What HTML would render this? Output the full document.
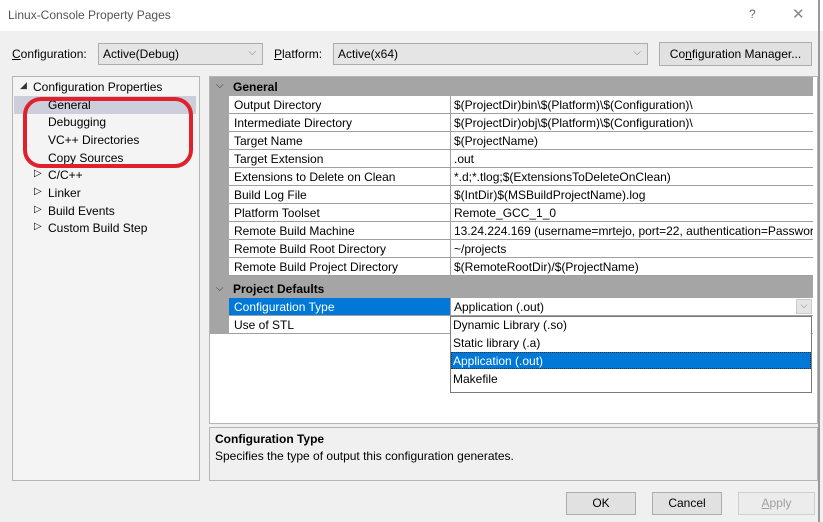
<!DOCTYPE html>
<html><head><style>
*{margin:0;padding:0;box-sizing:border-box}
body{width:823px;height:522px;background:#f0f0f0;font-family:"Liberation Sans",sans-serif;font-size:12px;color:#000;position:relative;overflow:hidden}
.a{position:absolute;white-space:nowrap}
.row{position:absolute;left:229px;width:584px;height:18px;background:#fff;border-bottom:1px solid #a0a0a0;white-space:nowrap;overflow:hidden}
.row span{position:absolute;top:2px;white-space:nowrap}
.row .n{left:5px}
.row .v{left:225px}
.row:before{content:"";position:absolute;left:221px;top:0;width:1px;height:18px;background:#a0a0a0}
.btn{position:absolute;height:23px;background:#e1e1e1;border:1px solid #adadad;text-align:center;line-height:21px}
</style></head><body>
<div class="a" style="left:0;top:0;width:823px;height:31px;background:#fff"></div>
<div class="a" style="left:8px;top:8px;color:#555;font-size:12px">Linux-Console Property Pages</div>
<div class="a" style="left:749px;top:7px;color:#666">?</div>
<div class="a" style="left:792px;top:5px;color:#888;font-size:15px;font-weight:lighter">✕</div>
<div class="a" style="left:818px;top:0;width:2px;height:522px;background:#999"></div>

<div class="a" style="left:12px;top:47px"><u>C</u>onfiguration:</div>
<div class="a" style="left:98px;top:43px;width:165px;height:22px;border:1px solid #adadad;background:#e5e5e5;padding:3px 4px">Active(Debug)<span style="position:absolute;right:6px;top:3px;color:#777;font-size:10px">⌵</span></div>
<div class="a" style="left:274px;top:47px"><u>P</u>latform:</div>
<div class="a" style="left:333px;top:43px;width:315px;height:22px;border:1px solid #adadad;background:#e5e5e5;padding:3px 4px">Active(x64)<span style="position:absolute;right:6px;top:3px;color:#777;font-size:10px">⌵</span></div>
<div class="a" style="left:659px;top:42px;width:153px;height:24px;border:1px solid #adadad;background:#e1e1e1;text-align:center;line-height:22px">Co<u>n</u>figuration Manager...</div>

<div class="a" style="left:12px;top:76px;width:188px;height:405px;background:#f4f4f4;border:1px solid #b5b5b5"></div>
<div class="a" style="left:14px;top:96px;width:182px;height:18px;background:#cccedb"></div>
<div class="a" style="left:20px;top:80px;font-size:9px;color:#333">◢</div>
<div class="a" style="left:33px;top:80px">Configuration Properties</div>
<div class="a" style="left:48px;top:98px">General</div>
<div class="a" style="left:48px;top:115px">Debugging</div>
<div class="a" style="left:48px;top:133px">VC++ Directories</div>
<div class="a" style="left:48px;top:151px">Copy Sources</div>
<div class="a" style="left:34px;top:168px;font-size:10px">▷</div><div class="a" style="left:48px;top:168px">C/C++</div>
<div class="a" style="left:34px;top:186px;font-size:10px">▷</div><div class="a" style="left:48px;top:186px">Linker</div>
<div class="a" style="left:34px;top:204px;font-size:10px">▷</div><div class="a" style="left:48px;top:204px">Build Events</div>
<div class="a" style="left:34px;top:221px;font-size:10px">▷</div><div class="a" style="left:48px;top:221px">Custom Build Step</div>
<div class="a" style="left:23px;top:97px;width:170px;height:71px;border:4px solid #e0202a;border-radius:18px"></div>

<div class="a" style="left:209px;top:76px;width:609px;height:348px;background:#fff;border:1px solid #b5b5b5"></div>
<div class="a" style="left:210px;top:77px;width:603px;height:257px;background:#a5a5a5"></div>
<div class="a" style="left:216px;top:80px;font-size:10px;color:#333">⌵</div>
<div class="a" style="left:233px;top:80px;font-weight:bold">General</div>
<div class="row" style="top:96px"><span class="n">Output Directory</span><span class="v">$(ProjectDir)bin\$(Platform)\$(Configuration)\</span></div>
<div class="row" style="top:114px"><span class="n">Intermediate Directory</span><span class="v">$(ProjectDir)obj\$(Platform)\$(Configuration)\</span></div>
<div class="row" style="top:132px"><span class="n">Target Name</span><span class="v">$(ProjectName)</span></div>
<div class="row" style="top:150px"><span class="n">Target Extension</span><span class="v">.out</span></div>
<div class="row" style="top:168px"><span class="n">Extensions to Delete on Clean</span><span class="v">*.d;*.tlog;$(ExtensionsToDeleteOnClean)</span></div>
<div class="row" style="top:186px"><span class="n">Build Log File</span><span class="v">$(IntDir)$(MSBuildProjectName).log</span></div>
<div class="row" style="top:204px"><span class="n">Platform Toolset</span><span class="v">Remote_GCC_1_0</span></div>
<div class="row" style="top:222px"><span class="n">Remote Build Machine</span><span class="v">13.24.224.169 (username=mrtejo, port=22, authentication=Password)</span></div>
<div class="row" style="top:240px"><span class="n">Remote Build Root Directory</span><span class="v">~/projects</span></div>
<div class="row" style="top:258px"><span class="n">Remote Build Project Directory</span><span class="v">$(RemoteRootDir)/$(ProjectName)</span></div>
<div class="a" style="left:216px;top:283px;font-size:10px;color:#333">⌵</div>
<div class="a" style="left:233px;top:282px;font-weight:bold">Project Defaults</div>
<div class="row" style="top:298px;background:#fff"><span class="n" style="left:0;top:0;width:221px;height:17px;background:#0078d7;color:#fff;padding:2px 5px">Configuration Type</span><span class="v">Application (.out)</span>
<span style="position:absolute;right:1px;top:1px;width:16px;height:15px;background:#e5e5e5;border:1px solid #ccc;color:#777;font-size:9px;text-align:center">⌵</span></div>
<div class="row" style="top:316px"><span class="n">Use of STL</span></div>

<div class="a" style="left:450px;top:316px;width:362px;height:77px;background:#fff;border:1px solid #7a7a7a"></div>
<div class="a" style="left:453px;top:318px">Dynamic Library (.so)</div>
<div class="a" style="left:453px;top:336px">Static library (.a)</div>
<div class="a" style="left:451px;top:352px;width:360px;height:17px;background:#0078d7;border:1px dotted #333"></div>
<div class="a" style="left:453px;top:354px;color:#fff">Application (.out)</div>
<div class="a" style="left:453px;top:372px">Makefile</div>

<div class="a" style="left:209px;top:427px;width:609px;height:54px;background:#f0f0f0;border:1px solid #b5b5b5"></div>
<div class="a" style="left:215px;top:432px;font-weight:bold">Configuration Type</div>
<div class="a" style="left:215px;top:449px">Specifies the type of output this configuration generates.</div>

<div class="btn" style="left:566px;top:492px;width:70px">OK</div>
<div class="btn" style="left:652px;top:492px;width:70px">Cancel</div>
<div class="btn" style="left:738px;top:492px;width:77px;color:#a0a0a0;background:#ececec;border-color:#d0d0d0"><u>A</u>pply</div>
</body></html>
